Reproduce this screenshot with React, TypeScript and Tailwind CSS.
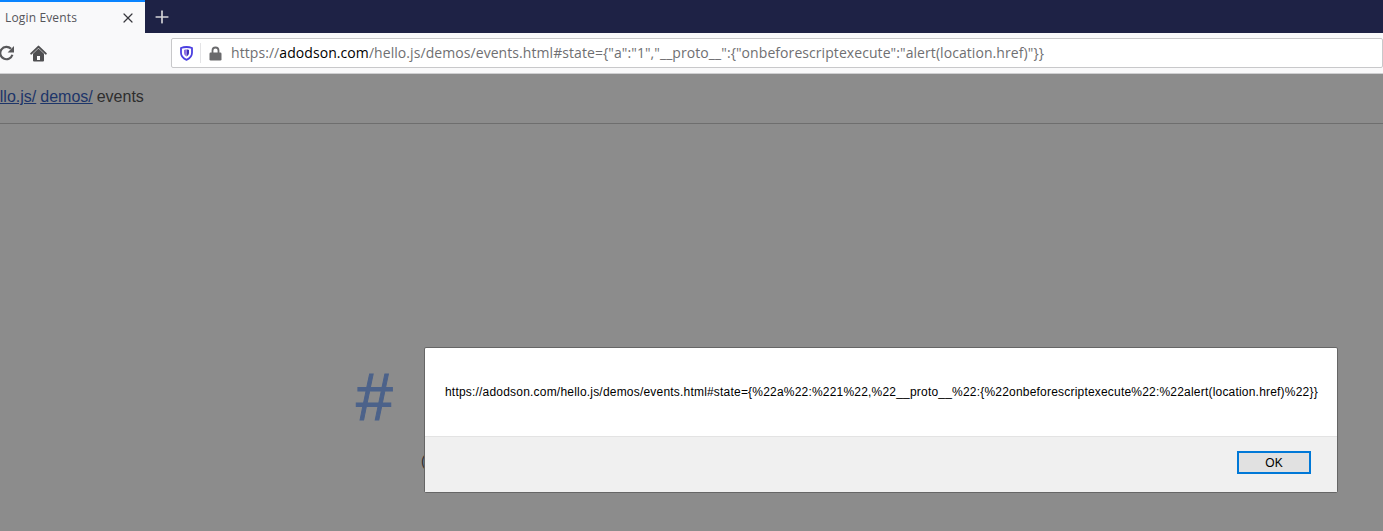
import React from 'react';
import { X, Plus } from 'lucide-react';

const sans = 'font-["Liberation_Sans",Arial,sans-serif]';
const urlFont = 'font-["Open_Sans","Noto_Sans",sans-serif]';

function ReloadIcon() {
    return (
        <svg width="16" height="16" viewBox="0 0 16 16" className="shrink-0 -ml-[1px]" fill="none">
            <path d="M13.400 9.800A6.200 6.200 0 1 1 12 3.800" stroke="#58585a" strokeWidth="2.200" />
            <path d="M15 1v6.400H8.600z" fill="#58585a" />
        </svg>
    );
}

function HomeIcon() {
    return (
        <svg width="17" height="17" viewBox="0 0 17 17" className="shrink-0" fill="none">
            <path d="M1.200 8.600 8.500 1.600l7.300 7" stroke="#4f4f51" strokeWidth="2" strokeLinecap="round" strokeLinejoin="round" />
            <path fillRule="evenodd" d="M8.500 3.600 14 8.800v6.700a1 1 0 0 1-1 1H4a1 1 0 0 1-1-1V8.800zM7 11v4h3v-4z" fill="#4f4f51" />
        </svg>
    );
}

function ShieldIcon() {
    return (
        <svg width="13" height="15" viewBox="0 0 13 15" fill="none">
            <path d="M6.500 1c2 0 4 .4 5.500 1v4.800c0 3.400-2.600 5.800-5.500 7C3.600 12.600 1 10.200 1 6.800V2c1.500-.6 3.500-1 5.500-1z" stroke="#4b3fe0" strokeWidth="1.800" />
            <path d="M6.500 3.600c.9 0 1.700.1 2.500.4v2.800c0 1.700-1.100 3-2.500 3.800z" fill="#3f2fb8" />
            <path d="M6.500 3.600c-.9 0-1.700.1-2.500.4v2.800c0 1.700 1.100 3 2.500 3.800z" fill="#8f6fe0" />
        </svg>
    );
}

function LockIcon() {
    return (
        <svg width="13" height="15" viewBox="0 0 13 15" fill="none">
            <path d="M3.500 7V4.500a3 3 0 0 1 6 0V7" stroke="#6a6a6c" strokeWidth="1.800" />
            <rect x="0.500" y="6.500" width="12" height="8" rx="1.200" fill="#6a6a6c" />
        </svg>
    );
}

export default function App() {
    return (
        <div className={`relative w-[1383px] h-[531px] overflow-hidden bg-[#8c8c8c] ${sans}`}>
            {/* tab strip */}
            <div className="h-[33px] flex bg-[#1e2245]">
                <div className="w-[145px] bg-[#f9f9fa] border-t-2 border-[#0a84ff] flex items-center pl-[5px] pr-[9px] justify-between">
                    <span className={`text-[12px] tracking-[0.15px] text-[#55555a] ${urlFont}`}>Login Events</span>
                    <X size={16} strokeWidth={1.8} className="text-[#38383d]" />
                </div>
                <div className="w-[34px] flex items-center justify-center">
                    <Plus size={20} strokeWidth={2} className="text-[#d4d4d8]" />
                </div>
            </div>

            {/* toolbar */}
            <div className="h-[41px] flex items-center bg-[#f9f9fa] border-b border-[#cfcfd1]">
                <div className="w-[171px] flex items-center gap-[15px] shrink-0">
                    <ReloadIcon />
                    <HomeIcon />
                </div>
                <div className="w-[1212px] h-[30px] flex items-center bg-white border border-[#c8c8ca] rounded-[2px] shrink-0">
                    <div className="w-[29px] flex items-center justify-center border-r border-[#e4e4e6] h-[20px] shrink-0">
                        <ShieldIcon />
                    </div>
                    <div className="w-[28px] mr-[2px] flex items-center justify-center shrink-0">
                        <LockIcon />
                    </div>
                    <span className={`text-[14px] tracking-[0.07px] -mt-[2px] whitespace-pre text-[#6f6f72] ${urlFont}`}>
                        https://<span className="text-black">adodson.com</span>/hello.js/demos/events.html#state={'{'}"a":"1","__proto__":{'{'}"onbeforescriptexecute":"alert(location.href)"{'}}'}
                    </span>
                </div>
            </div>

            {/* dimmed page */}
            <div className="h-[50px] flex items-start pt-[11px] border-b border-[#6e6e6e] text-[16px] text-[#2e2e2e] whitespace-pre">
                <div className="-ml-[18px] flex gap-[4px]">
                    <span className="underline text-[#1d3569]">hello.js/</span>
                    <span className="underline text-[#1d3569]">demos/</span>
                    <span>events</span>
                </div>
            </div>
            <div className="pl-[356px] pt-[233px]">
                <span className="text-[66px] leading-[80px] font-normal text-[#4c628a] [-webkit-text-stroke:1px_#4c628a]">#</span>
            </div>
            <div className="pl-[421px] pt-[14px] text-[14px] text-[#2e2e2e]">(</div>

            {/* alert dialog */}
            <div className="absolute left-[424px] top-[347px] w-[914px] h-[146px] flex flex-col bg-white border border-[#666666] rounded-[2px]">
                <div className="h-[89px] flex items-center pl-[20px] text-[12px] tracking-[0.2px] text-black whitespace-pre border-b border-[#e3e3e3]">
                    https://adodson.com/hello.js/demos/events.html#state={'{'}%22a%22:%221%22,%22__proto__%22:{'{'}%22onbeforescriptexecute%22:%22alert(location.href)%22{'}}'}
                </div>
                <div className="flex-1 flex items-start pt-[14px] justify-end pr-[26px] bg-[#f0f0f0]">
                    <button className="w-[74px] h-[23px] flex items-center justify-center text-[12px] text-black bg-[#e1e1e1] border-2 border-[#0078d7]">
                        OK
                    </button>
                </div>
            </div>
        </div>
    );
}
